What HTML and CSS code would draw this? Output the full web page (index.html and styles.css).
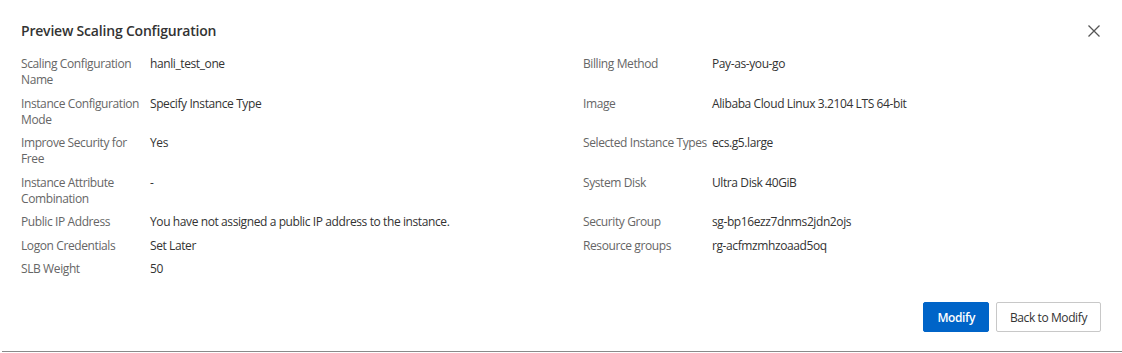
FILE: index.html
```html
<!DOCTYPE html>
<html lang="en">
  <head>
    <meta name="viewport" content="width=device-width, initial-scale=1">
    <title>Preview Scaling Configuration</title>
    <link rel="stylesheet" href="styles.css">
  </head>
  <body>
  <div class="dialog">
    <div class="dialog-header">
      <span class="dialog-title">Preview Scaling Configuration</span>
      <button class="close" aria-label="Close">
        <svg width="12" height="12" viewBox="0 0 12 12"><path d="M0.5 0.5 L11.5 11.5 M11.5 0.5 L0.5 11.5" stroke="#555" stroke-width="1.3" fill="none"/></svg>
      </button>
    </div>
    <div class="dialog-body">
      <div class="item"><div class="label">Scaling Configuration Name</div><div class="value">hanli_test_one</div></div>
      <div class="item"><div class="label">Billing Method</div><div class="value">Pay-as-you-go</div></div>
      <div class="item"><div class="label">Instance Configuration Mode</div><div class="value">Specify Instance Type</div></div>
      <div class="item"><div class="label">Image</div><div class="value">Alibaba Cloud Linux 3.2104 LTS 64-bit</div></div>
      <div class="item"><div class="label">Improve Security for Free</div><div class="value">Yes</div></div>
      <div class="item"><div class="label">Selected Instance Types</div><div class="value">ecs.g5.large</div></div>
      <div class="item"><div class="label">Instance Attribute Combination</div><div class="value">-</div></div>
      <div class="item"><div class="label">System Disk</div><div class="value">Ultra Disk 40GiB</div></div>
      <div class="item"><div class="label">Public IP Address</div><div class="value">You have not assigned a public IP address to the instance.</div></div>
      <div class="item"><div class="label">Security Group</div><div class="value">sg-bp16ezz7dnms2jdn2ojs</div></div>
      <div class="item"><div class="label">Logon Credentials</div><div class="value">Set Later</div></div>
      <div class="item"><div class="label">Resource groups</div><div class="value">rg-acfmzmhzoaad5oq</div></div>
      <div class="item"><div class="label">SLB Weight</div><div class="value">50</div></div>
    </div>
    <div class="dialog-footer">
      <button class="btn btn-primary">Modify</button>
      <button class="btn">Back to Modify</button>
    </div>
  </div>
  </body>
</html>
```

FILE: styles.css
```css
html, body {
  margin: 0;
  padding: 0;
  background: #fff;
  font-family: "Open Sans", "Noto Sans", sans-serif;
  font-size: 12px;
  letter-spacing: -0.4px;
  color: #333;
}

.dialog {
  padding: 20px 21px 19px 19px;
  border-bottom: 1px solid #8a8a8a;
  margin-left: 2px;
}

.dialog-header {
  display: flex;
  align-items: center;
  justify-content: space-between;
  height: 22px;
  margin-bottom: 14px;
}

.dialog-title {
  font-size: 14px;
  font-weight: 600;
  letter-spacing: -0.2px;
  color: #333;
  line-height: 22px;
}

.close {
  border: none;
  background: none;
  padding: 0;
  margin-right: 1px;
  width: 12px;
  height: 12px;
  display: flex;
  cursor: pointer;
}

.dialog-body {
  display: grid;
  grid-template-columns: 562px 1fr;
  row-gap: 7.5px;
  line-height: 16px;
}

.item {
  display: flex;
}

.label {
  width: 126px;
  padding-right: 3px;
  flex-shrink: 0;
  color: #666;
}

.value {
  color: #333;
}

.dialog-footer {
  display: flex;
  justify-content: flex-end;
  gap: 7px;
  margin-top: 25px;
}

.btn {
  height: 30px;
  padding: 0 13px;
  font-family: inherit;
  font-size: 12px;
  letter-spacing: -0.4px;
  color: #333;
  background: #fff;
  border: 1px solid #c8c8c8;
  border-radius: 2px;
  cursor: pointer;
}

.btn-primary {
  background: #0064c8;
  border-color: #0064c8;
  color: #fff;
  font-weight: 600;
  padding: 0 13px;
}
```
